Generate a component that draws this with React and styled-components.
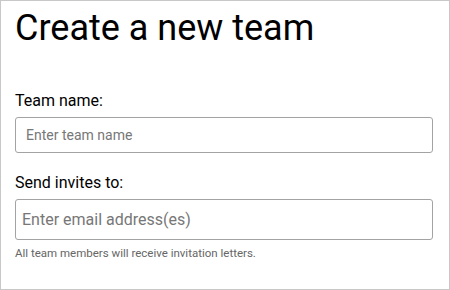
import React from "react";
import styled, { createGlobalStyle } from "styled-components";

const GlobalStyle = createGlobalStyle`
  html, body {
    margin: 0;
    padding: 0;
    background: #fff;
  }
  body {
    font-family: Roboto, "Liberation Sans", sans-serif;
  }
`;

const Card = styled.div`
  box-sizing: border-box;
  width: 450px;
  height: 290px;
  border: 1px solid #c8c8c8;
  padding: 4px 16px 0 14px;
  display: flex;
  flex-direction: column;
  background: #fff;
`;

const Title = styled.h1`
  margin: 0 0 40px;
  font-size: 36px;
  line-height: 46px;
  font-weight: 400;
  color: #000;
`;

const Field = styled.div`
  display: flex;
  flex-direction: column;
  margin-bottom: ${(props) => props.gap || 0}px;
`;

const Label = styled.label`
  font-size: 16px;
  line-height: 20px;
  font-weight: 400;
  color: #000;
  margin-bottom: 6px;
`;

const Input = styled.input`
  box-sizing: border-box;
  width: 100%;
  height: ${(props) => props.h}px;
  border: 1px solid #a3a3a3;
  border-radius: 3px;
  padding: 0 ${(props) => props.pad}px;
  font-family: Roboto, "Liberation Sans", sans-serif;
  font-size: ${(props) => props.size}px;
  color: #222;
  outline: none;
  &::placeholder {
    color: #777;
  }
`;

const Hint = styled.div`
  margin-top: 6px;
  font-size: 11.5px;
  line-height: 14px;
  color: #666;
`;

const App = () => {
  return (
    <>
      <GlobalStyle />
      <Card>
        <Title>Create a new team</Title>
        <Field gap={20}>
          <Label>Team name:</Label>
          <Input h={36} pad={10} size={14} placeholder="Enter team name" />
        </Field>
        <Field>
          <Label>Send invites to:</Label>
          <Input
            h={41}
            pad={6}
            size={16}
            placeholder="Enter email address(es)"
          />
          <Hint>All team members will receive invitation letters.</Hint>
        </Field>
      </Card>
    </>
  );
};

export default App;
